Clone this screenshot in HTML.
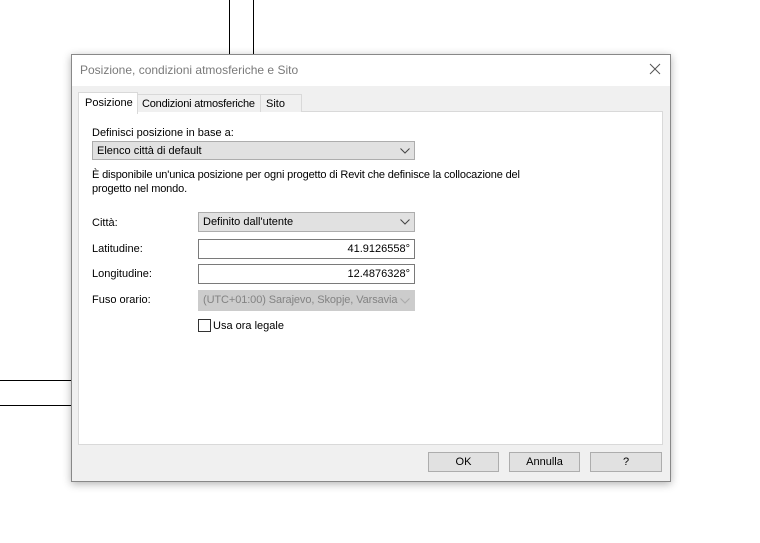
<!DOCTYPE html><html><head><style>
body{margin:0;width:760px;height:543px;background:#fff;position:relative;overflow:hidden;font-family:"Liberation Sans",sans-serif;font-size:11px;color:#000}
.a{position:absolute}
.l{position:absolute;background:#000}
.dlg{left:71px;top:54px;width:598px;height:426px;background:#f0f0f0;border:1px solid #888;box-shadow:0 2px 8px rgba(0,0,0,.3)}
.sel{position:absolute;height:19px;border:1px solid #adadad;background:#e1e1e1;box-sizing:border-box;padding:3px 4px;line-height:13px}
.arr{position:absolute}
.inp{position:absolute;height:20px;border:1px solid #7a7a7a;background:#fff;box-sizing:border-box;text-align:right;padding:3px 4px;line-height:13px}
.btn{position:absolute;top:452px;width:71px;height:20px;border:1px solid #adadad;background:#e1e1e1;box-sizing:border-box;text-align:center;line-height:19px}
</style></head><body>
<div class="l" style="left:229px;top:0;width:1px;height:54px"></div>
<div class="l" style="left:253px;top:0;width:1px;height:54px"></div>
<div class="l" style="left:0;top:380px;width:71px;height:1px"></div>
<div class="l" style="left:0;top:405px;width:71px;height:1px"></div>
<div class="a dlg"></div>
<div class="a" style="left:72px;top:55px;width:598px;height:31px;background:#fff"></div>
<div class="a" style="left:80px;top:63px;font-size:12px;color:#7a7a7a">Posizione, condizioni atmosferiche e Sito</div>
<svg class="a" style="left:649px;top:63px" width="12" height="12"><path d="M1 1L11 11M11 1L1 11" stroke="#555" stroke-width="1"/></svg>
<div class="a" style="left:78px;top:111px;width:583px;height:332px;background:#fff;border:1px solid #d9d9d9"></div>
<div class="a" style="left:137px;top:94px;width:163px;height:17px;background:#f0f0f0;border:1px solid #d9d9d9;border-bottom:none"></div>
<div class="a" style="left:260px;top:94px;width:1px;height:18px;background:#d9d9d9"></div>
<div class="a" style="left:78px;top:92px;width:58px;height:21px;background:#fff;border:1px solid #d9d9d9;border-bottom:none"></div>
<div class="a" style="left:85px;top:97px">Posizione</div>
<div class="a" style="left:142px;top:98px;letter-spacing:-0.2px">Condizioni atmosferiche</div>
<div class="a" style="left:266px;top:98px">Sito</div>
<div class="a" style="left:92px;top:127px">Definisci posizione in base a:</div>
<div class="sel" style="left:92px;top:141px;width:323px">Elenco città di default</div>
<svg class="arr" style="left:400px;top:148px" width="10" height="6"><path d="M0.5 0.5L5 5L9.5 0.5" stroke="#444" fill="none"/></svg>
<div class="a" style="left:92px;top:168px;line-height:14px;letter-spacing:-0.15px">È disponibile un'unica posizione per ogni progetto di Revit che definisce la collocazione del<br>progetto nel mondo.</div>
<div class="a" style="left:92px;top:217px">Città:</div>
<div class="sel" style="left:198px;top:212px;width:217px;height:20px">Definito dall'utente</div>
<svg class="arr" style="left:400px;top:219px" width="10" height="6"><path d="M0.5 0.5L5 5L9.5 0.5" stroke="#444" fill="none"/></svg>
<div class="a" style="left:92px;top:243px">Latitudine:</div>
<div class="inp" style="left:198px;top:239px;width:217px">41.9126558°</div>
<div class="a" style="left:92px;top:268px">Longitudine:</div>
<div class="inp" style="left:198px;top:264px;width:217px">12.4876328°</div>
<div class="a" style="left:92px;top:294px">Fuso orario:</div>
<div class="sel" style="left:198px;top:290px;width:217px;height:21px;border-color:#ccc;background:#ccc;color:#838383;overflow:hidden;white-space:nowrap;padding-right:0"><div style="width:195px;overflow:hidden;letter-spacing:-0.1px">(UTC+01:00) Sarajevo, Skopje, Varsavia</div></div>
<svg class="arr" style="left:400px;top:298px" width="10" height="6"><path d="M0.5 0.5L5 5L9.5 0.5" stroke="#aaa" fill="none"/></svg>
<div class="a" style="left:198px;top:319px;width:13px;height:13px;border:1px solid #333;box-sizing:border-box;background:#fff"></div>
<div class="a" style="left:213px;top:320px">Usa ora legale</div>
<div class="btn" style="left:428px">OK</div>
<div class="btn" style="left:509px">Annulla</div>
<div class="btn" style="left:590px;width:72px">?</div>
</body></html>
